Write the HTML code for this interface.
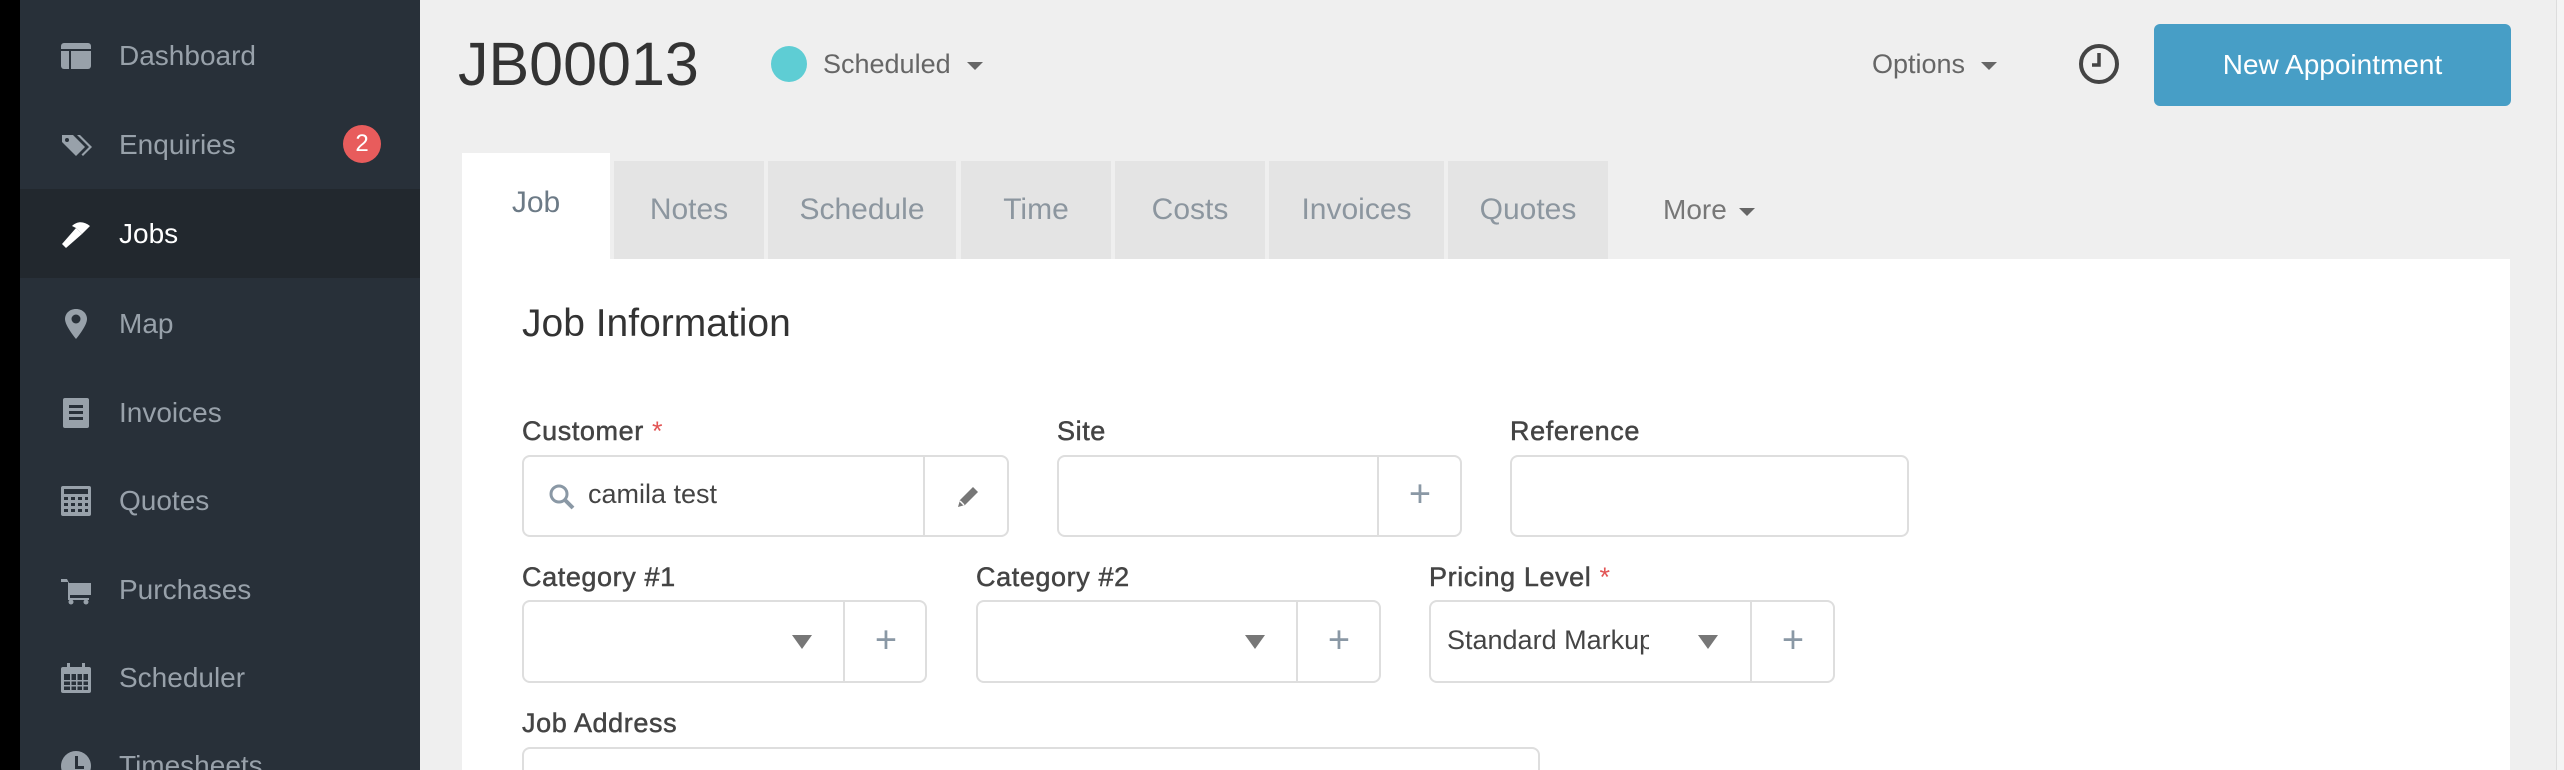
<!DOCTYPE html>
<html style="width:2564px;height:770px;overflow:hidden"><head><meta charset="utf-8"><style>
*{margin:0;padding:0;box-sizing:border-box}
body{width:2564px;height:770px;overflow:hidden;background:#efefef;font-family:"Liberation Sans",sans-serif;position:relative}
.abs{position:absolute}
#black{left:0;top:0;width:20px;height:770px;background:#000}
#side{left:20px;top:0;width:400px;height:770px;background:#283039;overflow:hidden}
.item{position:absolute;left:0;width:400px;height:89px;display:flex;align-items:center}
.item .ic{position:absolute;left:40px;top:50%;transform:translateY(-50%);width:32px;height:32px}
.item span{position:absolute;left:99px;font-size:28px;color:#98a1aa;top:50%;transform:translateY(-50%)}
.item.act{background:#22282e}
.item.act span{color:#fff}
.lbl{position:absolute;font-size:27px;color:#444;letter-spacing:0.6px;-webkit-text-stroke:0.5px #444}
.lbl b{color:#e25555;font-weight:normal;-webkit-text-stroke:0}
.box{position:absolute;background:#fff;border:2px solid #dedede;border-radius:8px}
.div{position:absolute;top:0;bottom:0;width:2px;background:#dedede}
.plus{position:absolute;font-size:38px;color:#8a98a5;top:50%;transform:translate(-50%,-52%)}
.tri{position:absolute;width:0;height:0;border-left:10px solid transparent;border-right:10px solid transparent;border-top:14px solid #777;top:50%;transform:translate(-50%,-50%)}
.tab{position:absolute;top:161px;height:98px;background:#e4e4e4;color:#8c969f;font-size:30px;display:flex;align-items:center;justify-content:center}
.caret{display:inline-block;width:0;height:0;border-left:8px solid transparent;border-right:8px solid transparent;border-top:8px solid #666;vertical-align:middle;margin-left:12px}
</style></head><body>
<div id="black" class="abs"></div>
<div id="side" class="abs">
<div class="item" style="top:11px"><svg class="ic" viewBox="0 0 32 32"><rect x="1" y="3" width="30" height="26" rx="3" fill="#98a1aa"/><rect x="1" y="9" width="30" height="2" fill="#283039"/><rect x="9" y="11" width="2" height="18" fill="#283039"/></svg><span>Dashboard</span></div>
<div class="item" style="top:100px"><svg class="ic" viewBox="0 0 32 32"><path d="M2 6h11l12 12-9 9L2 13z" fill="#98a1aa"/><path d="M17 6h3l12 12-9 9-1.5-1.5 7.5-7.5z" fill="#98a1aa"/><circle cx="7" cy="11" r="2" fill="#283039"/></svg><span>Enquiries</span></div>
<div class="item act" style="top:189px"><svg class="ic" viewBox="0 0 32 32"><path d="M16 10l6 6L6 30 2 26z" fill="#fff"/><path d="M12 8c5-5 12-5 18 0l-6 6-2 2-6-6z" fill="#fff"/></svg><span>Jobs</span></div>
<div class="item" style="top:279px"><svg class="ic" viewBox="0 0 32 32"><path d="M16 1C9 1 5 6 5 11c0 7 11 20 11 20s11-13 11-20C27 6 23 1 16 1z" fill="#98a1aa"/><circle cx="16" cy="11" r="4.5" fill="#283039"/></svg><span>Map</span></div>
<div class="item" style="top:368px"><svg class="ic" viewBox="0 0 32 32"><rect x="3" y="1" width="26" height="30" rx="2" fill="#98a1aa"/><rect x="9" y="8" width="14" height="3" fill="#283039"/><rect x="9" y="14" width="14" height="3" fill="#283039"/><rect x="9" y="20" width="14" height="3" fill="#283039"/></svg><span>Invoices</span></div>
<div class="item" style="top:456px"><svg class="ic" viewBox="0 0 32 32"><rect x="1" y="1" width="30" height="30" rx="2" fill="#98a1aa"/><rect x="4" y="4" width="24" height="5" fill="#283039"/><g fill="#283039"><rect x="4" y="12" width="4" height="3"/><rect x="11" y="12" width="4" height="3"/><rect x="18" y="12" width="4" height="3"/><rect x="25" y="12" width="3" height="3"/><rect x="4" y="18" width="4" height="3"/><rect x="11" y="18" width="4" height="3"/><rect x="18" y="18" width="4" height="3"/><rect x="25" y="18" width="3" height="3"/><rect x="4" y="24" width="4" height="3"/><rect x="11" y="24" width="4" height="3"/><rect x="18" y="24" width="4" height="3"/><rect x="25" y="24" width="3" height="3"/></g></svg><span>Quotes</span></div>
<div class="item" style="top:545px"><svg class="ic" viewBox="0 0 32 32"><path d="M1 5h6l2 4h22v12H10v3h19v2H8V8H1z" fill="#98a1aa"/><circle cx="11" cy="28" r="2.5" fill="#98a1aa"/><circle cx="26" cy="28" r="2.5" fill="#98a1aa"/></svg><span>Purchases</span></div>
<div class="item" style="top:633px"><svg class="ic" viewBox="0 0 32 32"><rect x="1" y="5" width="30" height="26" rx="2" fill="#98a1aa"/><g fill="#283039"><rect x="4" y="12" width="24" height="16"/></g><g fill="#98a1aa"><rect x="4" y="18" width="24" height="1.5"/><rect x="4" y="23" width="24" height="1.5"/><rect x="10" y="12" width="1.5" height="16"/><rect x="16" y="12" width="1.5" height="16"/><rect x="22" y="12" width="1.5" height="16"/></g><rect x="7" y="1" width="3" height="7" fill="#98a1aa"/><rect x="22" y="1" width="3" height="7" fill="#98a1aa"/></svg><span>Scheduler</span></div>
<div class="item" style="top:721px"><svg class="ic" viewBox="0 0 32 32"><circle cx="16" cy="16" r="15" fill="#98a1aa"/><path d="M15 6h3v10h6v3h-9z" fill="#283039"/></svg><span>Timesheets</span></div>
<div class="abs" style="left:323px;top:125px;width:38px;height:38px;border-radius:50%;background:#e85c5c;color:#fff;font-size:24px;text-align:center;line-height:38px">2</div>
</div>

<div class="abs" style="left:458px;top:28px;font-size:61px;color:#333;line-height:72px">JB00013</div>
<div class="abs" style="left:771px;top:46px;width:36px;height:36px;border-radius:50%;background:#5ecdd4"></div>
<div class="abs" style="left:823px;top:48px;font-size:27px;color:#666;line-height:32px">Scheduled<span class="caret" style="margin-left:16px"></span></div>
<div class="abs" style="left:1872px;top:48px;font-size:27px;color:#666;line-height:32px">Options<span class="caret" style="margin-left:16px"></span></div>
<svg class="abs" style="left:2078px;top:43px" width="42" height="42" viewBox="0 0 42 42"><circle cx="21" cy="21" r="18" fill="none" stroke="#444" stroke-width="4"/><path d="M21 10v12h-7" fill="none" stroke="#444" stroke-width="3.5"/></svg>
<div class="abs" style="left:2154px;top:24px;width:357px;height:82px;background:#479ec6;border-radius:6px;color:#fff;font-size:28px;text-align:center;line-height:82px">New Appointment</div>

<div class="abs" style="left:2556px;top:0;width:8px;height:770px;background:#f4f4f4;border-left:1px solid #ddd"></div>

<div class="abs" style="left:462px;top:259px;width:2048px;height:511px;background:#fff;overflow:hidden">
<div class="abs" style="left:60px;top:41px;font-size:39px;color:#333;line-height:48px">Job Information</div>
</div>
<div class="abs" style="left:462px;top:153px;width:148px;height:110px;background:#fff;color:#6c7a86;font-size:30px;display:flex;align-items:center;justify-content:center;padding-bottom:10px">Job</div>
<div class="tab" style="left:614px;width:150px">Notes</div>
<div class="tab" style="left:768px;width:188px">Schedule</div>
<div class="tab" style="left:961px;width:150px">Time</div>
<div class="tab" style="left:1115px;width:150px">Costs</div>
<div class="tab" style="left:1269px;width:175px">Invoices</div>
<div class="tab" style="left:1448px;width:160px">Quotes</div>
<div class="abs" style="left:1663px;top:194px;font-size:28px;color:#777;line-height:32px">More<span class="caret"></span></div>

<div class="lbl" style="left:522px;top:416px">Customer <b>*</b></div>
<div class="lbl" style="left:1057px;top:416px">Site</div>
<div class="lbl" style="left:1510px;top:416px">Reference</div>
<div class="box" style="left:522px;top:455px;width:487px;height:82px">
 <svg class="abs" style="left:24px;top:26px" width="28" height="28" viewBox="0 0 28 28"><circle cx="11" cy="11" r="8" fill="none" stroke="#8a98a5" stroke-width="3"/><path d="M17 17l8 8" stroke="#8a98a5" stroke-width="4"/></svg>
 <div class="abs" style="left:64px;top:22px;font-size:27px;color:#444">camila test</div>
 <div class="div" style="left:399px"></div>
 <svg class="abs" style="left:430px;top:26px" width="28" height="28" viewBox="0 0 28 28"><path d="M4 24l2-7L19 4l5 5L11 22z" fill="#777"/><path d="M6 18l4 4" stroke="#fff" stroke-width="1.5"/></svg>
</div>
<div class="box" style="left:1057px;top:455px;width:405px;height:82px"><div class="div" style="left:318px"></div><div class="plus" style="left:361px">+</div></div>
<div class="box" style="left:1510px;top:455px;width:399px;height:82px"></div>

<div class="lbl" style="left:522px;top:562px">Category #1</div>
<div class="lbl" style="left:976px;top:562px">Category #2</div>
<div class="lbl" style="left:1429px;top:562px">Pricing Level <b>*</b></div>
<div class="box" style="left:522px;top:600px;width:405px;height:83px"><div class="tri" style="left:278px"></div><div class="div" style="left:319px"></div><div class="plus" style="left:362px">+</div></div>
<div class="box" style="left:976px;top:600px;width:405px;height:83px"><div class="tri" style="left:277px"></div><div class="div" style="left:318px"></div><div class="plus" style="left:361px">+</div></div>
<div class="box" style="left:1429px;top:600px;width:406px;height:83px"><div class="abs" style="left:16px;top:23px;font-size:27px;color:#444;width:202px;overflow:hidden;white-space:nowrap">Standard Markup</div><div class="tri" style="left:277px"></div><div class="div" style="left:319px"></div><div class="plus" style="left:362px">+</div></div>

<div class="lbl" style="left:522px;top:708px">Job Address</div>
<div class="box" style="left:522px;top:747px;width:1018px;height:23px;border-bottom:none;border-radius:8px 8px 0 0"></div>
</body></html>
